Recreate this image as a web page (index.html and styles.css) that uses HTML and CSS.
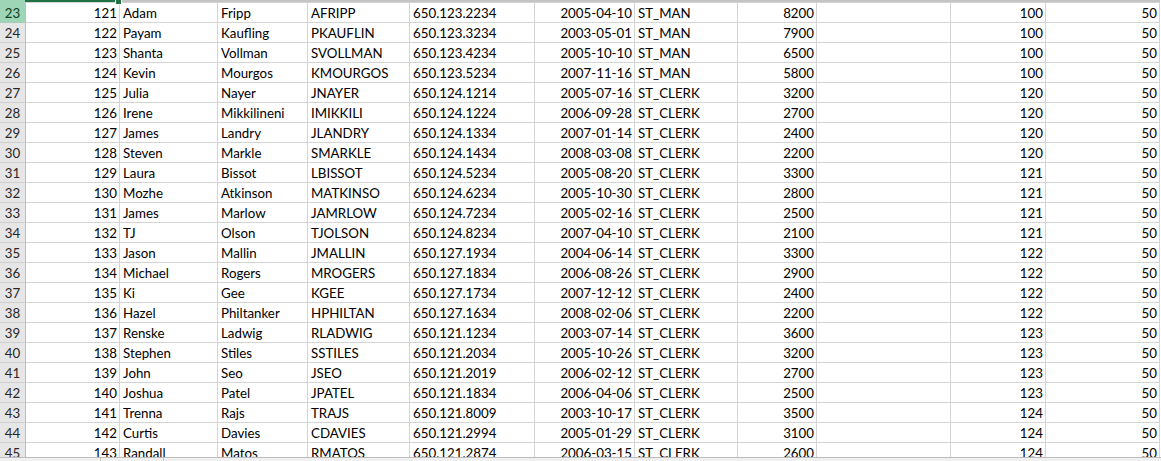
FILE: index.html
```html
<!DOCTYPE html>
<html>
<head>
<meta charset="utf-8">
<link rel="stylesheet" href="styles.css">
</head>
<body>
<div class="sheet">
  <div class="topline"><span class="hdr-top"></span><span class="sel-top"><span class="handle"></span></span></div>
  <div class="row active"><div class="rh">23</div><div class="c r">121</div><div class="c">Adam</div><div class="c">Fripp</div><div class="c">AFRIPP</div><div class="c">650.123.2234</div><div class="c r">2005-04-10</div><div class="c">ST_MAN</div><div class="c r">8200</div><div class="c"></div><div class="c r">100</div><div class="c r">50</div></div>
  <div class="row"><div class="rh">24</div><div class="c r">122</div><div class="c">Payam</div><div class="c">Kaufling</div><div class="c">PKAUFLIN</div><div class="c">650.123.3234</div><div class="c r">2003-05-01</div><div class="c">ST_MAN</div><div class="c r">7900</div><div class="c"></div><div class="c r">100</div><div class="c r">50</div></div>
  <div class="row"><div class="rh">25</div><div class="c r">123</div><div class="c">Shanta</div><div class="c">Vollman</div><div class="c">SVOLLMAN</div><div class="c">650.123.4234</div><div class="c r">2005-10-10</div><div class="c">ST_MAN</div><div class="c r">6500</div><div class="c"></div><div class="c r">100</div><div class="c r">50</div></div>
  <div class="row"><div class="rh">26</div><div class="c r">124</div><div class="c">Kevin</div><div class="c">Mourgos</div><div class="c">KMOURGOS</div><div class="c">650.123.5234</div><div class="c r">2007-11-16</div><div class="c">ST_MAN</div><div class="c r">5800</div><div class="c"></div><div class="c r">100</div><div class="c r">50</div></div>
  <div class="row"><div class="rh">27</div><div class="c r">125</div><div class="c">Julia</div><div class="c">Nayer</div><div class="c">JNAYER</div><div class="c">650.124.1214</div><div class="c r">2005-07-16</div><div class="c">ST_CLERK</div><div class="c r">3200</div><div class="c"></div><div class="c r">120</div><div class="c r">50</div></div>
  <div class="row"><div class="rh">28</div><div class="c r">126</div><div class="c">Irene</div><div class="c">Mikkilineni</div><div class="c">IMIKKILI</div><div class="c">650.124.1224</div><div class="c r">2006-09-28</div><div class="c">ST_CLERK</div><div class="c r">2700</div><div class="c"></div><div class="c r">120</div><div class="c r">50</div></div>
  <div class="row"><div class="rh">29</div><div class="c r">127</div><div class="c">James</div><div class="c">Landry</div><div class="c">JLANDRY</div><div class="c">650.124.1334</div><div class="c r">2007-01-14</div><div class="c">ST_CLERK</div><div class="c r">2400</div><div class="c"></div><div class="c r">120</div><div class="c r">50</div></div>
  <div class="row"><div class="rh">30</div><div class="c r">128</div><div class="c">Steven</div><div class="c">Markle</div><div class="c">SMARKLE</div><div class="c">650.124.1434</div><div class="c r">2008-03-08</div><div class="c">ST_CLERK</div><div class="c r">2200</div><div class="c"></div><div class="c r">120</div><div class="c r">50</div></div>
  <div class="row"><div class="rh">31</div><div class="c r">129</div><div class="c">Laura</div><div class="c">Bissot</div><div class="c">LBISSOT</div><div class="c">650.124.5234</div><div class="c r">2005-08-20</div><div class="c">ST_CLERK</div><div class="c r">3300</div><div class="c"></div><div class="c r">121</div><div class="c r">50</div></div>
  <div class="row"><div class="rh">32</div><div class="c r">130</div><div class="c">Mozhe</div><div class="c">Atkinson</div><div class="c">MATKINSO</div><div class="c">650.124.6234</div><div class="c r">2005-10-30</div><div class="c">ST_CLERK</div><div class="c r">2800</div><div class="c"></div><div class="c r">121</div><div class="c r">50</div></div>
  <div class="row"><div class="rh">33</div><div class="c r">131</div><div class="c">James</div><div class="c">Marlow</div><div class="c">JAMRLOW</div><div class="c">650.124.7234</div><div class="c r">2005-02-16</div><div class="c">ST_CLERK</div><div class="c r">2500</div><div class="c"></div><div class="c r">121</div><div class="c r">50</div></div>
  <div class="row"><div class="rh">34</div><div class="c r">132</div><div class="c">TJ</div><div class="c">Olson</div><div class="c">TJOLSON</div><div class="c">650.124.8234</div><div class="c r">2007-04-10</div><div class="c">ST_CLERK</div><div class="c r">2100</div><div class="c"></div><div class="c r">121</div><div class="c r">50</div></div>
  <div class="row"><div class="rh">35</div><div class="c r">133</div><div class="c">Jason</div><div class="c">Mallin</div><div class="c">JMALLIN</div><div class="c">650.127.1934</div><div class="c r">2004-06-14</div><div class="c">ST_CLERK</div><div class="c r">3300</div><div class="c"></div><div class="c r">122</div><div class="c r">50</div></div>
  <div class="row"><div class="rh">36</div><div class="c r">134</div><div class="c">Michael</div><div class="c">Rogers</div><div class="c">MROGERS</div><div class="c">650.127.1834</div><div class="c r">2006-08-26</div><div class="c">ST_CLERK</div><div class="c r">2900</div><div class="c"></div><div class="c r">122</div><div class="c r">50</div></div>
  <div class="row"><div class="rh">37</div><div class="c r">135</div><div class="c">Ki</div><div class="c">Gee</div><div class="c">KGEE</div><div class="c">650.127.1734</div><div class="c r">2007-12-12</div><div class="c">ST_CLERK</div><div class="c r">2400</div><div class="c"></div><div class="c r">122</div><div class="c r">50</div></div>
  <div class="row"><div class="rh">38</div><div class="c r">136</div><div class="c">Hazel</div><div class="c">Philtanker</div><div class="c">HPHILTAN</div><div class="c">650.127.1634</div><div class="c r">2008-02-06</div><div class="c">ST_CLERK</div><div class="c r">2200</div><div class="c"></div><div class="c r">122</div><div class="c r">50</div></div>
  <div class="row"><div class="rh">39</div><div class="c r">137</div><div class="c">Renske</div><div class="c">Ladwig</div><div class="c">RLADWIG</div><div class="c">650.121.1234</div><div class="c r">2003-07-14</div><div class="c">ST_CLERK</div><div class="c r">3600</div><div class="c"></div><div class="c r">123</div><div class="c r">50</div></div>
  <div class="row"><div class="rh">40</div><div class="c r">138</div><div class="c">Stephen</div><div class="c">Stiles</div><div class="c">SSTILES</div><div class="c">650.121.2034</div><div class="c r">2005-10-26</div><div class="c">ST_CLERK</div><div class="c r">3200</div><div class="c"></div><div class="c r">123</div><div class="c r">50</div></div>
  <div class="row"><div class="rh">41</div><div class="c r">139</div><div class="c">John</div><div class="c">Seo</div><div class="c">JSEO</div><div class="c">650.121.2019</div><div class="c r">2006-02-12</div><div class="c">ST_CLERK</div><div class="c r">2700</div><div class="c"></div><div class="c r">123</div><div class="c r">50</div></div>
  <div class="row"><div class="rh">42</div><div class="c r">140</div><div class="c">Joshua</div><div class="c">Patel</div><div class="c">JPATEL</div><div class="c">650.121.1834</div><div class="c r">2006-04-06</div><div class="c">ST_CLERK</div><div class="c r">2500</div><div class="c"></div><div class="c r">123</div><div class="c r">50</div></div>
  <div class="row"><div class="rh">43</div><div class="c r">141</div><div class="c">Trenna</div><div class="c">Rajs</div><div class="c">TRAJS</div><div class="c">650.121.8009</div><div class="c r">2003-10-17</div><div class="c">ST_CLERK</div><div class="c r">3500</div><div class="c"></div><div class="c r">124</div><div class="c r">50</div></div>
  <div class="row"><div class="rh">44</div><div class="c r">142</div><div class="c">Curtis</div><div class="c">Davies</div><div class="c">CDAVIES</div><div class="c">650.121.2994</div><div class="c r">2005-01-29</div><div class="c">ST_CLERK</div><div class="c r">3100</div><div class="c"></div><div class="c r">124</div><div class="c r">50</div></div>
  <div class="row"><div class="rh">45</div><div class="c r">143</div><div class="c">Randall</div><div class="c">Matos</div><div class="c">RMATOS</div><div class="c">650.121.2874</div><div class="c r">2006-03-15</div><div class="c">ST_CLERK</div><div class="c r">2600</div><div class="c"></div><div class="c r">124</div><div class="c r">50</div></div>
  <div class="tabbar"><span class="tb1"></span><span class="tb2"></span><span class="tb3"></span></div>
</div>
</body>
</html>
```
FILE: styles.css
```css
html, body {
  margin: 0;
  padding: 0;
  background: #ffffff;
  overflow: hidden;
}
.sheet {
  position: relative;
  width: 1161px;
  height: 461px;
  overflow: hidden;
  font-family: Lato, "Liberation Sans", sans-serif;
  font-size: 13.3px;
  color: #000000;
}
.topline {
  display: flex;
  height: 3px;
  box-sizing: border-box;
  background: linear-gradient(#c4c4c4 0 2px, #d4d4d4 2px 3px);
  width: 1160px;
}
.hdr-top {
  width: 25px;
  height: 3px;
  background: #9fd5b7;
}
.sel-top {
  position: relative;
  width: 95px;
  height: 2px;
  background: #217346;
}
.handle {
  position: absolute;
  right: -2px;
  top: 0;
  width: 5px;
  height: 4px;
  background: #217346;
  border: 1px solid #ffffff;
  border-top: 0;
}
.row {
  display: grid;
  grid-template-columns: 26px 94px 98px 90px 102px 125px 100px 103px 79px 134px 95px 114px;
  height: 20px;
}
.row > div {
  box-sizing: border-box;
  height: 20px;
  border-right: 1px solid #d4d4d4;
  border-bottom: 1px solid #d4d4d4;
  line-height: 20px;
  overflow: hidden;
  white-space: nowrap;
}
.c {
  padding: 0 3px;
}
.c.r {
  text-align: right;
  padding: 0 2px 0 0;
}
.rh {
  background: #e6e6e6;
  color: #262626;
  text-align: center;
  border-right-color: #bdbdbd !important;
  border-bottom-color: #cfcfcf !important;
}
.row.active .rh {
  background: #9fd5b7;
  color: #0b3d21;
  border-bottom-color: #a9cbb6 !important;
}
.tabbar {
  position: absolute;
  left: 0;
  bottom: 0;
  width: 1161px;
  height: 3px;
  background: #f0f0f0;
  border-top: 1px solid #bcbcbc;
  display: flex;
}
.tb1 { width: 100px; border-right: 1px solid #c6c6c6; }
.tb2 { width: 62px; border-right: 1px solid #c6c6c6; }
.tb3 { flex: 1; }
```
